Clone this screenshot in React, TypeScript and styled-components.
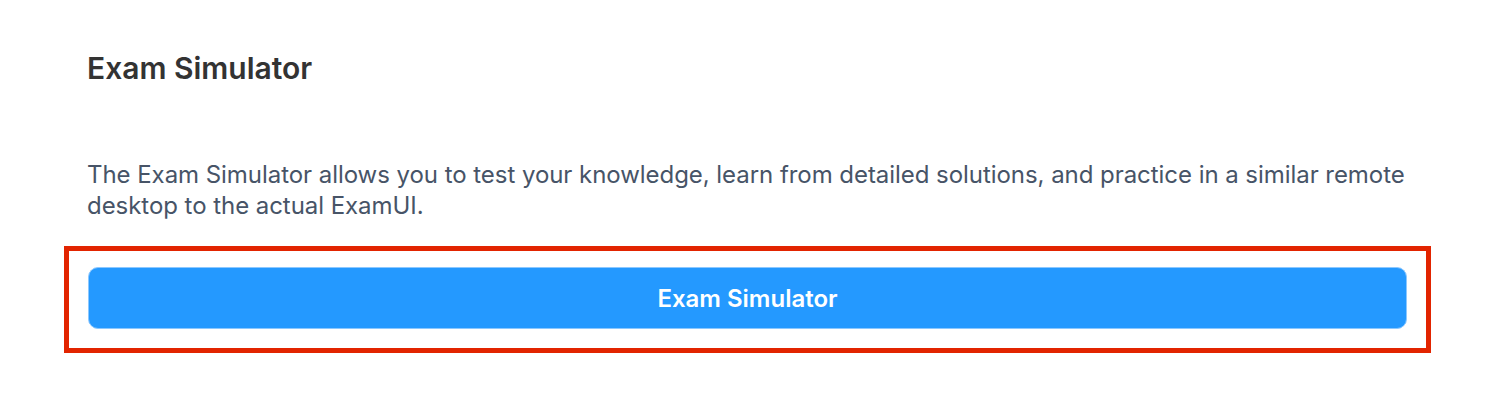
import React from "react";
import styled, { createGlobalStyle } from "styled-components";

const Global = createGlobalStyle`
  html, body { margin: 0; padding: 0; background: #ffffff; }
  body { font-family: Inter, "Liberation Sans", sans-serif; }
`;

const Page = styled.div`
  width: 1508px;
  height: 407px;
  box-sizing: border-box;
  padding: 50px 80px 0 87px;
`;

const Title = styled.h2`
  margin: 0;
  font-size: 30px;
  line-height: 36px;
  font-weight: 600;
  color: #333333;
`;

const Description = styled.p`
  margin: 73px 0 0;
  font-size: 24px;
  line-height: 31px;
  letter-spacing: -0.05px;
  font-weight: 400;
  color: #475467;
`;

const Highlight = styled.div`
  margin: 25px 0 0 -23px;
  width: 1367px;
  box-sizing: border-box;
  border: 5px solid #e22400;
  padding: 16px 19px 19px 19px;
`;

const Button = styled.button`
  display: flex;
  align-items: center;
  justify-content: center;
  width: 100%;
  height: 62px;
  border: 1px solid #8cc8ff;
  border-radius: 10px;
  background: #2499ff;
  color: #ffffff;
  font-family: Inter, "Liberation Sans", sans-serif;
  font-size: 24px;
  font-weight: 600;
  cursor: pointer;
`;

export default function App() {
  return (
    <>
      <Global />
      <Page>
        <Title>Exam Simulator</Title>
        <Description>
          The Exam Simulator allows you to test your knowledge, learn from detailed solutions, and practice in a similar remote
          desktop to the actual ExamUI.
        </Description>
        <Highlight>
          <Button>Exam Simulator</Button>
        </Highlight>
      </Page>
    </>
  );
}
